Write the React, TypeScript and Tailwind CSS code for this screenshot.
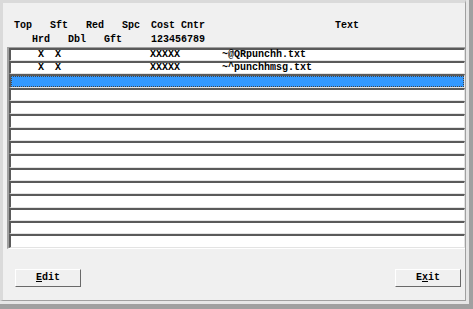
import React from "react";

const mono = { fontFamily: '"Liberation Mono", "Courier New", monospace' };

const heights = [13, 13, 14, 13, 13, 14, 13, 13, 14, 13, 13, 14, 13, 13, 14];

type Row = { a: string; b: string; cc: string; t: string } | null;
const data: Row[] = [
  { a: "X", b: "X", cc: "XXXXX", t: "~@QRpunchh.txt" },
  { a: "X", b: "X", cc: "XXXXX", t: "~^punchhmsg.txt" },
];

export default function App() {
  return (
    <div className="w-[473px] h-[309px] border-r-4 border-b-[5px] border-[#a0a0a0] bg-[#a0a0a0]">
      <div className="w-full h-full pr-[3px] pb-[3px] bg-[#e6e6e6]">
        <div
          className="w-full h-full bg-[#f0f0f0] border-t-[3px] border-l-[3px] border-[#dadada] border-r border-b border-r-[#a0a0a0] border-b-[#a0a0a0] flex flex-col font-bold text-[10px] text-black"
          style={mono}
        >
          <div className="pt-[16px] whitespace-pre">
            <div className="flex h-[14px] leading-[14px] pl-[11px]">
              <span className="w-[36px]">Top</span>
              <span className="w-[36px]">Sft</span>
              <span className="w-[36px]">Red</span>
              <span className="w-[29px]">Spc</span>
              <span className="w-[184px]">Cost Cntr</span>
              <span>Text</span>
            </div>
            <div className="flex h-[14px] leading-[14px] pl-[29px]">
              <span className="w-[36px]">Hrd</span>
              <span className="w-[36px]">Dbl</span>
              <span className="w-[47px]">Gft</span>
              <span>123456789</span>
            </div>
          </div>
          <div className="ml-[4px] border-t border-l-2 border-[#a0a0a0] border-b border-b-white flex flex-col">
            {heights.map((h, i) => {
              const r = data[i];
              const sel = i === 2;
              return (
                <div
                  key={i}
                  className="flex border-t-2 border-l-2 border-t-[#5a5a5a] border-l-[#5a5a5a] border-b border-r border-b-[#e3e3e3] border-r-[#e3e3e3]"
                  style={{ height: h }}
                >
                  <div
                    className={
                      sel
                        ? "flex-1 bg-[#3399ff] outline-1 outline-dotted outline-[#444] -outline-offset-1"
                        : "flex-1 bg-white flex items-center whitespace-pre leading-[10px]"
                    }
                  >
                    {r && (
                      <>
                        <span className="ml-[27px] w-[17px]">{r.a}</span>
                        <span className="w-[95px]">{r.b}</span>
                        <span className="w-[72px]">{r.cc}</span>
                        <span>{r.t}</span>
                      </>
                    )}
                  </div>
                </div>
              );
            })}
          </div>
          <div className="mt-[20px] flex justify-between pl-[12px] pr-[4px]">
            <button
              className="w-[66px] h-[18px] bg-[#f0f0f0] border border-t-white border-l-white border-r-[#696969] border-b-[#696969] flex items-center justify-center leading-none font-bold"
              style={mono}
            >
              <span className="underline">E</span>dit
            </button>
            <button
              className="w-[66px] h-[18px] bg-[#f0f0f0] border border-t-white border-l-white border-r-[#696969] border-b-[#696969] flex items-center justify-center leading-none font-bold"
              style={mono}
            >
              E<span className="underline">x</span>it
            </button>
          </div>
        </div>
      </div>
    </div>
  );
}
